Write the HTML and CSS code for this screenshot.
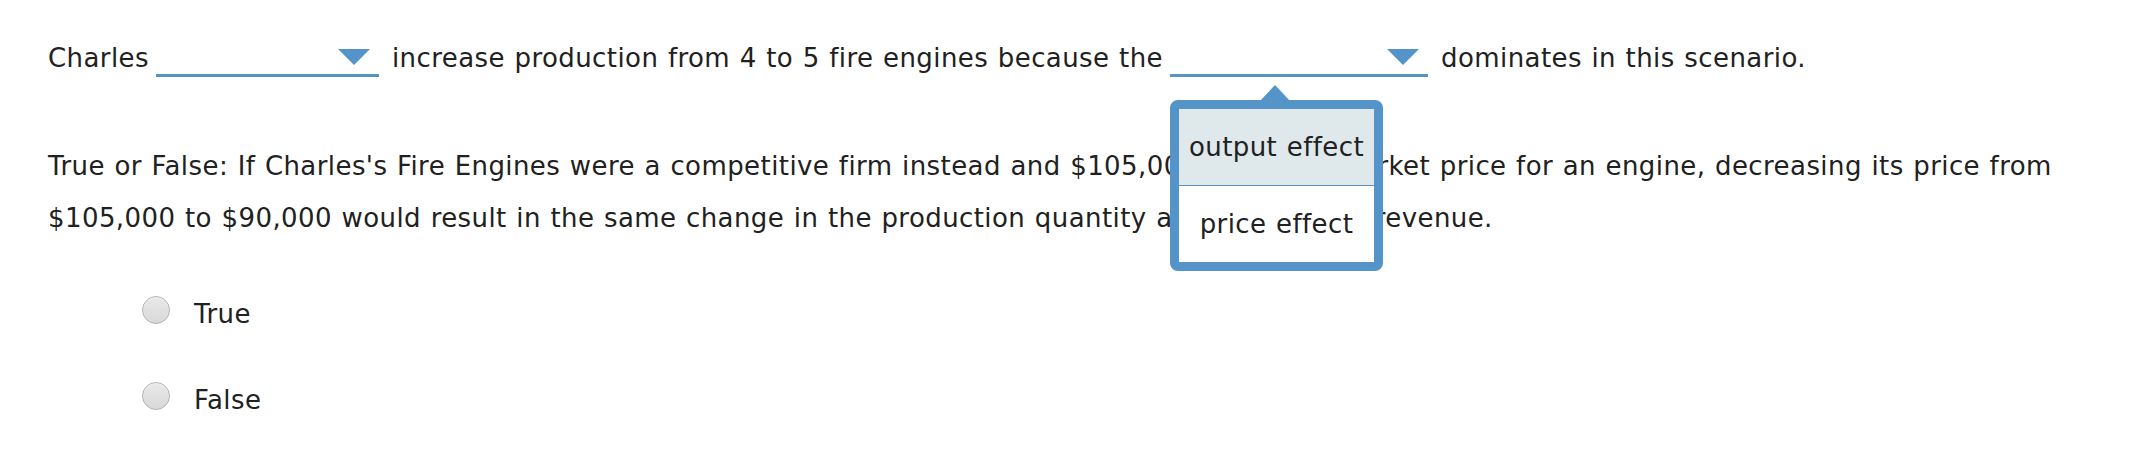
FILE: index.html
```html
<!DOCTYPE html>
<html>
<head>
<meta charset="utf-8">
<link rel="stylesheet" href="styles.css">
</head>
<body>
<div class="page">
  <div class="line1">
    <span class="txt">Charles</span>
    <div class="dd dd1">
      <svg class="caret" width="32" height="16" viewBox="0 0 32 16"><polygon points="0,0 32,0 16,16" fill="#5594c8"/></svg>
    </div>
    <span class="txt">increase production from 4 to 5 fire engines because the</span>
    <div class="dd dd2">
      <svg class="caret" width="32" height="16" viewBox="0 0 32 16"><polygon points="0,0 32,0 16,16" fill="#5594c8"/></svg>
      <div class="popup">
        <svg class="pointer" width="30" height="16" viewBox="0 0 30 16"><polygon points="0,16 15,0 30,16" fill="#5594c8"/></svg>
        <div class="menu">
          <div class="opt opt-sel">output effect</div>
          <div class="opt">price effect</div>
        </div>
      </div>
    </div>
    <span class="txt">dominates in this scenario.</span>
  </div>
  <p class="question">True or False: If Charles's Fire Engines were a competitive firm instead and $105,000 were the market price for an engine, decreasing its price from<br>$105,000 to $90,000 would result in the same change in the production quantity and in the total revenue.</p>
  <div class="choices">
    <label class="choice"><span class="radio"></span><span class="lbl">True</span></label>
    <label class="choice"><span class="radio"></span><span class="lbl">False</span></label>
  </div>
</div>
</body>
</html>
```
FILE: styles.css
```css
html, body {
  margin: 0;
  padding: 0;
  background: #ffffff;
}
.page {
  padding: 43px 0 0 48px;
  font-family: "DejaVu Sans", Verdana, sans-serif;
  font-size: 26px;
  letter-spacing: 0.42px;
  word-spacing: 0.9px;
  color: #212121;
}
.line1 {
  display: flex;
  align-items: flex-start;
  white-space: nowrap;
}
.txt {
  line-height: 30px;
}
.dd {
  position: relative;
  box-sizing: border-box;
  height: 28px;
  margin-top: 6px;
  border-bottom: 3px solid #5594c8;
  display: flex;
  justify-content: flex-end;
  align-items: flex-start;
  padding-right: 9px;
}
.dd1 {
  width: 223px;
  margin-left: 7px;
  margin-right: 13px;
}
.dd2 {
  width: 258px;
  margin-left: 7px;
  margin-right: 13px;
}
.caret {
  display: block;
}
.popup {
  position: absolute;
  left: 0;
  top: 36px;
  width: 213px;
  z-index: 5;
}
.pointer {
  display: block;
  margin-left: 90px;
  margin-bottom: -1px;
}
.menu {
  box-sizing: border-box;
  width: 213px;
  height: 171px;
  border: 9px solid #5594c8;
  border-radius: 8px;
  background: #ffffff;
  display: flex;
  flex-direction: column;
}
.opt {
  height: 76px;
  display: flex;
  align-items: center;
  justify-content: center;
  line-height: 30px;
  background: #ffffff;
  white-space: nowrap;
}
.opt-sel {
  height: 76px;
  background: #dfe8eb;
  border-bottom: 1px solid #5594c8;
}
.question {
  margin: 63px 0 0 0;
  line-height: 52px;
}
.choices {
  margin-top: 52px;
  margin-left: 94px;
  display: flex;
  flex-direction: column;
  gap: 50px;
}
.choice {
  display: flex;
  align-items: flex-start;
  height: 36px;
}
.radio {
  box-sizing: border-box;
  width: 28px;
  height: 28px;
  border-radius: 50%;
  border: 1px solid #b3b3b3;
  background: linear-gradient(#e9e9e9, #d9d9d9);
  box-shadow: inset 0 1px 1px rgba(255,255,255,0.6);
  margin-right: 24px;
}
.lbl {
  line-height: 36px;
}
```
